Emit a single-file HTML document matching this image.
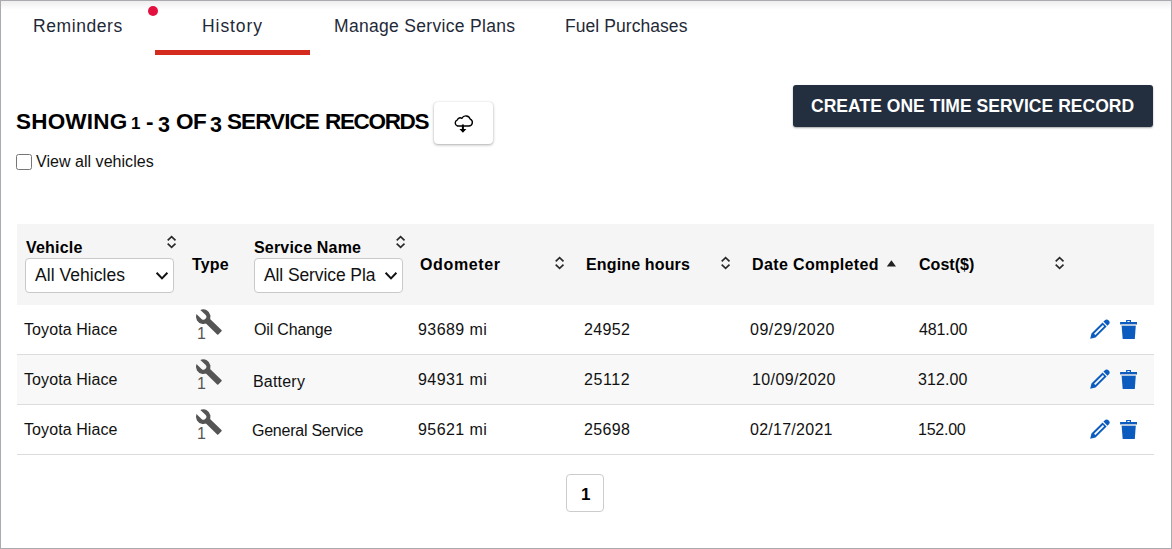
<!DOCTYPE html>
<html lang="en">
<head>
<meta charset="utf-8">
<title>Service History</title>
<style>
html,body{margin:0;padding:0}
body{width:1172px;height:549px;position:relative;overflow:hidden;background:#fff;font-family:"Liberation Sans",sans-serif}
.a{position:absolute;display:block}
.t{position:absolute;white-space:pre;font-family:"Liberation Sans",sans-serif;line-height:normal}
#frame{left:0;top:0;width:1170px;height:547px;border:1px solid #a9abae;z-index:5;pointer-events:none}
#topshade{left:1px;top:1px;width:1170px;height:9px;background:linear-gradient(#eee,#fff)}
#underline{left:155px;top:50px;width:155px;height:4.5px;background:#d52b1e}
#dot{left:148.4px;top:6px;width:10px;height:10px;border-radius:50%;background:#e4103f}
#dl{left:434px;top:102px;width:59px;height:42px;background:#fff;border-radius:4px;box-shadow:0 1px 3px rgba(0,0,0,.32),0 0 1px rgba(0,0,0,.15)}
#create{left:793px;top:85px;width:360px;height:41.5px;background:#232f3e;border-radius:3px;box-shadow:0 1px 2px rgba(0,0,0,.35)}
#cb{left:16px;top:154px;width:14px;height:14px;border:1px solid #767676;border-radius:2.5px;background:#fff}
#thead{left:17px;top:224px;width:1137px;height:80.5px;background:#f5f5f5}
.row{left:17px;width:1137px;height:49px;border-bottom:1px solid #dcdcdc}
.sel{height:33px;border:1px solid #c9c9c9;border-radius:4px;background:#fff}
#pg{left:566px;top:474px;width:36px;height:36px;border:1px solid #ccc;border-radius:4px;background:#fff}
</style>
</head>
<body>
<div class="a" id="topshade"></div>
<div class="a" id="underline"></div>
<div class="a" id="dot"></div>
<div class="a" id="dl"></div>
<svg class="a" style="left:444px;top:108px" width="40" height="30" viewBox="444.8 107.3 40 30">
<path d="M458.3 125.3 H469.6 A3.6 3.6 0 0 0 471 118.4 A4.6 4.6 0 0 0 462.6 117.6 A2.9 2.9 0 0 0 458.2 119.2 A3.2 3.2 0 0 0 458.3 125.3 Z" fill="none" stroke="#000" stroke-width="1.4" stroke-linejoin="round"/>
<path d="M462.7 123.8 H464.7 V128.3 H467.2 L463.7 132 L460.2 128.3 H462.7 Z" fill="#000"/>
</svg>
<div class="a" id="create"></div>
<div class="a" id="cb"></div>
<div class="a" id="thead"></div>
<div class="a row" style="top:304.5px;background:#fff"></div>
<div class="a row" style="top:354.5px;background:#f8f8f8"></div>
<div class="a row" style="top:404.5px;background:#fff"></div>
<div class="a sel" style="left:25px;top:258px;width:147px"></div>
<div class="a sel" style="left:254px;top:258px;width:147px"></div>
<svg class="a" style="left:154.9px;top:270.8px" width="14" height="10" viewBox="0 0 14 10"><path d="M1.6 1.8 L7 7.4 L12.4 1.8" fill="none" stroke="#111" stroke-width="2"/></svg>
<svg class="a" style="left:383.9px;top:270.8px" width="14" height="10" viewBox="0 0 14 10"><path d="M1.6 1.8 L7 7.4 L12.4 1.8" fill="none" stroke="#111" stroke-width="2"/></svg>
<svg class="a" style="left:165.6px;top:233.9px" width="12" height="16" viewBox="0 0 12 16"><path d="M1.7 6.4 L5.6 2.7 L9.5 6.4 M1.7 9.6 L5.6 13.3 L9.5 9.6" fill="none" stroke="#2a2a2a" stroke-width="1.7"/></svg>
<svg class="a" style="left:394.6px;top:233.9px" width="12" height="16" viewBox="0 0 12 16"><path d="M1.7 6.4 L5.6 2.7 L9.5 6.4 M1.7 9.6 L5.6 13.3 L9.5 9.6" fill="none" stroke="#2a2a2a" stroke-width="1.7"/></svg>
<svg class="a" style="left:553.6px;top:255px" width="12" height="16" viewBox="0 0 12 16"><path d="M1.7 6.4 L5.6 2.7 L9.5 6.4 M1.7 9.6 L5.6 13.3 L9.5 9.6" fill="none" stroke="#2a2a2a" stroke-width="1.7"/></svg>
<svg class="a" style="left:719.6px;top:255px" width="12" height="16" viewBox="0 0 12 16"><path d="M1.7 6.4 L5.6 2.7 L9.5 6.4 M1.7 9.6 L5.6 13.3 L9.5 9.6" fill="none" stroke="#2a2a2a" stroke-width="1.7"/></svg>
<svg class="a" style="left:1053.5px;top:255px" width="12" height="16" viewBox="0 0 12 16"><path d="M1.7 6.4 L5.6 2.7 L9.5 6.4 M1.7 9.6 L5.6 13.3 L9.5 9.6" fill="none" stroke="#2a2a2a" stroke-width="1.7"/></svg>
<svg class="a" style="left:884px;top:257px" width="16" height="12" viewBox="884 257 16 12"><path d="M891.4 260.3 L896 266.4 H886.8 Z" fill="#222"/></svg>
<svg class="a" style="left:190px;top:305px" width="40" height="40" viewBox="190 305 40 40"><g transform="translate(203.2 316.6) rotate(44)" fill="#555"><path d="M-6.7 -2.8 A7.3 7.3 0 1 1 -6.7 2.8 L0.4 2.8 A2.8 2.8 0 0 0 0.4 -2.8 Z"/><path d="M4 -3.1 H22.4 a1 1 0 0 1 1 1 V2.1 a1 1 0 0 1 -1 1 H4 Z"/></g></svg>
<svg class="a" style="left:190px;top:355px" width="40" height="40" viewBox="190 305 40 40"><g transform="translate(203.2 316.6) rotate(44)" fill="#555"><path d="M-6.7 -2.8 A7.3 7.3 0 1 1 -6.7 2.8 L0.4 2.8 A2.8 2.8 0 0 0 0.4 -2.8 Z"/><path d="M4 -3.1 H22.4 a1 1 0 0 1 1 1 V2.1 a1 1 0 0 1 -1 1 H4 Z"/></g></svg>
<svg class="a" style="left:190px;top:405px" width="40" height="40" viewBox="190 305 40 40"><g transform="translate(203.2 316.6) rotate(44)" fill="#555"><path d="M-6.7 -2.8 A7.3 7.3 0 1 1 -6.7 2.8 L0.4 2.8 A2.8 2.8 0 0 0 0.4 -2.8 Z"/><path d="M4 -3.1 H22.4 a1 1 0 0 1 1 1 V2.1 a1 1 0 0 1 -1 1 H4 Z"/></g></svg>
<svg class="a" style="left:1084px;top:314px" width="60" height="30" viewBox="1084 314 60 30"><g transform="translate(1090.2 338.7) rotate(-44.6)" fill="#0b5cbe"><path d="M0 0 L4.6 -2.9 H20.2 V2.9 H4.6 Z M6.3 -0.9 V0.9 H18.7 V-0.9 Z" fill-rule="evenodd"/><path d="M21.4 -2.9 H23.1 A2.9 2.9 0 0 1 23.1 2.9 H21.4 Z"/></g><g fill="#0b5cbe"><path d="M1126.1 319.9 H1131 V322.1 H1137 V324.4 H1120.1 V322.1 H1126.1 Z M1127.4 321 V322.1 H1129.7 V321 Z" fill-rule="evenodd"/><path d="M1121.6 325.6 H1135.8 L1134.8 338.9 H1122.7 Z"/></g><path d="M1121.3 324.4 H1136 V325.6 H1121.3 Z" fill="#d3d9df"/></svg>
<svg class="a" style="left:1084px;top:364px" width="60" height="30" viewBox="1084 314 60 30"><g transform="translate(1090.2 338.7) rotate(-44.6)" fill="#0b5cbe"><path d="M0 0 L4.6 -2.9 H20.2 V2.9 H4.6 Z M6.3 -0.9 V0.9 H18.7 V-0.9 Z" fill-rule="evenodd"/><path d="M21.4 -2.9 H23.1 A2.9 2.9 0 0 1 23.1 2.9 H21.4 Z"/></g><g fill="#0b5cbe"><path d="M1126.1 319.9 H1131 V322.1 H1137 V324.4 H1120.1 V322.1 H1126.1 Z M1127.4 321 V322.1 H1129.7 V321 Z" fill-rule="evenodd"/><path d="M1121.6 325.6 H1135.8 L1134.8 338.9 H1122.7 Z"/></g><path d="M1121.3 324.4 H1136 V325.6 H1121.3 Z" fill="#d3d9df"/></svg>
<svg class="a" style="left:1084px;top:414px" width="60" height="30" viewBox="1084 314 60 30"><g transform="translate(1090.2 338.7) rotate(-44.6)" fill="#0b5cbe"><path d="M0 0 L4.6 -2.9 H20.2 V2.9 H4.6 Z M6.3 -0.9 V0.9 H18.7 V-0.9 Z" fill-rule="evenodd"/><path d="M21.4 -2.9 H23.1 A2.9 2.9 0 0 1 23.1 2.9 H21.4 Z"/></g><g fill="#0b5cbe"><path d="M1126.1 319.9 H1131 V322.1 H1137 V324.4 H1120.1 V322.1 H1126.1 Z M1127.4 321 V322.1 H1129.7 V321 Z" fill-rule="evenodd"/><path d="M1121.6 325.6 H1135.8 L1134.8 338.9 H1122.7 Z"/></g><path d="M1121.3 324.4 H1136 V325.6 H1121.3 Z" fill="#d3d9df"/></svg>
<div class="a" id="pg"></div>
<span class="t" style="left:33.0px;top:16.0px;font-size:17.5px;letter-spacing:0.575px;color:#1f2937">Reminders</span>
<span class="t" style="left:202.0px;top:16.0px;font-size:17.5px;letter-spacing:0.933px;color:#1f2937">History</span>
<span class="t" style="left:334.0px;top:16.0px;font-size:17.5px;letter-spacing:0.316px;color:#1f2937">Manage Service Plans</span>
<span class="t" style="left:565.0px;top:16.0px;font-size:17.5px;letter-spacing:0.062px;color:#1f2937">Fuel Purchases</span>
<span class="t" style="left:16.0px;top:109.0px;font-size:22.5px;letter-spacing:0.200px;color:#000;font-weight:700">SHOWING</span>
<span class="t" style="left:131.0px;top:114.0px;font-size:17px;letter-spacing:0.000px;color:#000;font-weight:700">1</span>
<span class="t" style="left:146.0px;top:109.0px;font-size:22.5px;letter-spacing:0.000px;color:#000;font-weight:700">-</span>
<span class="t" style="left:158.0px;top:113.0px;font-size:21.5px;letter-spacing:0.000px;color:#000;font-weight:700">3</span>
<span class="t" style="left:176.0px;top:109.0px;font-size:22.5px;letter-spacing:-0.600px;color:#000;font-weight:700">OF</span>
<span class="t" style="left:210.0px;top:113.0px;font-size:21.5px;letter-spacing:0.000px;color:#000;font-weight:700">3</span>
<span class="t" style="left:227.0px;top:109.0px;font-size:22.5px;letter-spacing:-0.933px;color:#000;font-weight:700">SERVICE</span>
<span class="t" style="left:325.0px;top:109.0px;font-size:22.5px;letter-spacing:-1.333px;color:#000;font-weight:700">RECORDS</span>
<span class="t" style="left:811.0px;top:96.0px;font-size:17.5px;letter-spacing:0.034px;color:#fff;font-weight:700">CREATE ONE TIME SERVICE RECORD</span>
<span class="t" style="left:36.0px;top:153.0px;font-size:16px;letter-spacing:0.037px;color:#111">View all vehicles</span>
<span class="t" style="left:26.0px;top:239.0px;font-size:16px;letter-spacing:0.200px;color:#000;font-weight:700">Vehicle</span>
<span class="t" style="left:35.0px;top:265.0px;font-size:17.5px;letter-spacing:0.055px;color:#111">All Vehicles</span>
<span class="t" style="left:192.0px;top:256.0px;font-size:16px;letter-spacing:0.133px;color:#000;font-weight:700">Type</span>
<span class="t" style="left:254.0px;top:239.0px;font-size:16px;letter-spacing:0.182px;color:#000;font-weight:700">Service Name</span>
<span class="t" style="left:264.0px;top:265.0px;font-size:17.5px;letter-spacing:-0.100px;color:#111">All Service Pla</span>
<span class="t" style="left:420.0px;top:256.0px;font-size:16px;letter-spacing:0.629px;color:#000;font-weight:700">Odometer</span>
<span class="t" style="left:586.0px;top:256.0px;font-size:16px;letter-spacing:0.145px;color:#000;font-weight:700">Engine hours</span>
<span class="t" style="left:752.0px;top:256.0px;font-size:16px;letter-spacing:0.369px;color:#000;font-weight:700">Date Completed</span>
<span class="t" style="left:919.0px;top:256.0px;font-size:16px;letter-spacing:0.033px;color:#000;font-weight:700">Cost($)</span>
<span class="t" style="left:24.0px;top:321.0px;font-size:16px;letter-spacing:0.091px;color:#111">Toyota Hiace</span>
<span class="t" style="left:197.0px;top:325.0px;font-size:16px;letter-spacing:0.000px;color:#555">1</span>
<span class="t" style="left:254.0px;top:321.0px;font-size:16px;letter-spacing:-0.178px;color:#111">Oil Change</span>
<span class="t" style="left:418.0px;top:321.0px;font-size:16px;letter-spacing:0.429px;color:#111">93689 mi</span>
<span class="t" style="left:584.0px;top:321.0px;font-size:16px;letter-spacing:0.350px;color:#111">24952</span>
<span class="t" style="left:750.0px;top:321.0px;font-size:16px;letter-spacing:0.489px;color:#111">09/29/2020</span>
<span class="t" style="left:919.0px;top:321.0px;font-size:16px;letter-spacing:-0.120px;color:#111">481.00</span>
<span class="t" style="left:24.0px;top:371.0px;font-size:16px;letter-spacing:0.091px;color:#111">Toyota Hiace</span>
<span class="t" style="left:197.0px;top:375.0px;font-size:16px;letter-spacing:0.000px;color:#555">1</span>
<span class="t" style="left:253.0px;top:373.0px;font-size:16px;letter-spacing:0.200px;color:#111">Battery</span>
<span class="t" style="left:418.0px;top:371.0px;font-size:16px;letter-spacing:0.429px;color:#111">94931 mi</span>
<span class="t" style="left:584.0px;top:371.0px;font-size:16px;letter-spacing:0.600px;color:#111">25112</span>
<span class="t" style="left:752.0px;top:371.0px;font-size:16px;letter-spacing:0.378px;color:#111">10/09/2020</span>
<span class="t" style="left:918.0px;top:371.0px;font-size:16px;letter-spacing:0.080px;color:#111">312.00</span>
<span class="t" style="left:24.0px;top:421.0px;font-size:16px;letter-spacing:0.091px;color:#111">Toyota Hiace</span>
<span class="t" style="left:197.0px;top:425.0px;font-size:16px;letter-spacing:0.000px;color:#555">1</span>
<span class="t" style="left:252.0px;top:422.0px;font-size:16px;letter-spacing:-0.243px;color:#111">General Service</span>
<span class="t" style="left:418.0px;top:421.0px;font-size:16px;letter-spacing:0.429px;color:#111">95621 mi</span>
<span class="t" style="left:584.0px;top:421.0px;font-size:16px;letter-spacing:0.350px;color:#111">25698</span>
<span class="t" style="left:750.0px;top:421.0px;font-size:16px;letter-spacing:0.267px;color:#111">02/17/2021</span>
<span class="t" style="left:918.0px;top:421.0px;font-size:16px;letter-spacing:-0.240px;color:#111">152.00</span>
<span class="t" style="left:581.0px;top:485.0px;font-size:17px;letter-spacing:0.000px;color:#000;font-weight:700">1</span>
<div class="a" id="frame"></div>
</body>
</html>
